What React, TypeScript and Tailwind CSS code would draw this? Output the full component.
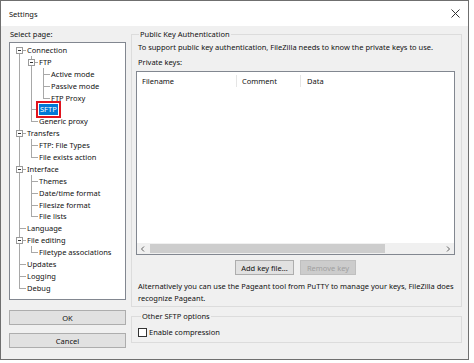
import type { ReactNode } from "react";

type Node = {
  label: string;
  level: number;
  expander?: boolean;
  selected?: boolean;
};

const tree: Node[] = [
  { label: "Connection", level: 0, expander: true },
  { label: "FTP", level: 1, expander: true },
  { label: "Active mode", level: 2 },
  { label: "Passive mode", level: 2 },
  { label: "FTP Proxy", level: 2 },
  { label: "SFTP", level: 1, selected: true },
  { label: "Generic proxy", level: 1 },
  { label: "Transfers", level: 0, expander: true },
  { label: "FTP: File Types", level: 1 },
  { label: "File exists action", level: 1 },
  { label: "Interface", level: 0, expander: true },
  { label: "Themes", level: 1 },
  { label: "Date/time format", level: 1 },
  { label: "Filesize format", level: 1 },
  { label: "File lists", level: 1 },
  { label: "Language", level: 0 },
  { label: "File editing", level: 0, expander: true },
  { label: "Filetype associations", level: 1 },
  { label: "Updates", level: 0 },
  { label: "Logging", level: 0 },
  { label: "Debug", level: 0 },
];

function hasNextSibling(i: number) {
  const level = tree[i].level;
  for (let j = i + 1; j < tree.length; j++) {
    if (tree[j].level < level) return false;
    if (tree[j].level === level) return true;
  }
  return false;
}

const LINE = "#a8a8a8";

// one 12x12 cell of the tree guides
function Guide({
  pipe,
  connector,
  top,
  bottom,
  expander,
}: {
  pipe?: boolean;
  connector?: boolean;
  top?: boolean;
  bottom?: boolean;
  expander?: boolean;
}) {
  return (
    <svg width="12" height="12" className="shrink-0" shapeRendering="crispEdges">
      {pipe && <line x1="5.5" y1="0" x2="5.5" y2="12" stroke={LINE} />}
      {connector && top && <line x1="5.5" y1="0" x2="5.5" y2="6.5" stroke={LINE} />}
      {connector && bottom && <line x1="5.5" y1="6.5" x2="5.5" y2="12" stroke={LINE} />}
      {connector && <line x1="5.5" y1="6.5" x2="12" y2="6.5" stroke={LINE} />}
      {expander && (
        <g>
          <rect x="2.5" y="3.5" width="6" height="6" fill="#fff" stroke="#9a9a9a" />
          <line x1="4" y1="6.5" x2="7" y2="6.5" stroke="#333" />
        </g>
      )}
    </svg>
  );
}

function Tree() {
  const open: boolean[] = [];
  return (
    <div className="h-[258px] mt-[2px] border border-[#828790] bg-white pt-[1px] pl-[4px]">
      {tree.map((n, i) => {
        const next = hasNextSibling(i);
        const guides: ReactNode[] = [];
        for (let k = 0; k < n.level; k++) {
          guides.push(<Guide key={k} pipe={open[k]} />);
        }
        guides.push(
          <Guide
            key="c"
            connector
            top={i !== 0}
            bottom={next}
            expander={n.expander}
          />
        );
        open[n.level] = next;
        return (
          <div key={n.label} className="flex h-[11.9px] items-center">
            {guides}
            {n.selected ? (
              <span className="ml-[1px] bg-[#0078d7] px-[1px] leading-[11px] text-white outline-2 outline-offset-[1px] outline-[#e0141e]">
                {n.label}
              </span>
            ) : (
              <span className="pl-[1px] whitespace-nowrap">{n.label}</span>
            )}
          </div>
        );
      })}
    </div>
  );
}

function Button({ children, disabled, className }: { children: ReactNode; disabled?: boolean; className?: string }) {
  return (
    <div
      className={
        "flex h-[15px] items-center justify-center border " +
        (disabled
          ? "border-[#bfbfbf] bg-[#cccccc] text-[#a0a0a0] "
          : "border-[#adadad] bg-[#e1e1e1] text-[#111] ") +
        (className ?? "")
      }
    >
      {children}
    </div>
  );
}

export default function App() {
  return (
    <div className="h-[363px] w-[474px] bg-white font-['Noto_Sans',sans-serif] text-[7.5px] leading-[12px] text-[#111]">
      <div className="flex h-[360px] w-[469px] flex-col border border-[#6f6f6f] bg-[#f0f0f0]">
        <div className="flex h-[25px] shrink-0 items-center justify-between bg-white pl-2 pr-[8px]">
          <span>Settings</span>
          <svg width="9" height="9" viewBox="0 0 9 9">
            <path d="M0.5 0.5 L8.5 8.5 M8.5 0.5 L0.5 8.5" stroke="#333" strokeWidth="1" />
          </svg>
        </div>

        <div className="flex gap-[5px] pl-2 pt-[2px]">
          {/* left column */}
          <div className="w-[117px] shrink-0">
            <div className="pl-[1px]">Select page:</div>
            <Tree />
            <Button className="mt-[10px]">OK</Button>
            <Button className="mt-[8px]">Cancel</Button>
          </div>

          {/* right column */}
          <div className="w-[331px]">
            <fieldset className="border border-[#dcdcdc] pb-[2px] pl-[4px] pr-[6px]">
              <legend className="ml-[3px] px-[1px]">Public Key Authentication</legend>
              <div className="pt-[1px] pl-[2px]">
                To support public key authentication, FileZilla needs to know the private keys to use.
              </div>
              <div className="mt-[3px] pl-[2px]">Private keys:</div>
              <div className="mt-[3px] flex h-[184px] flex-col border border-[#828790] bg-white">
                <div className="flex h-[17px] items-center">
                  <div className="w-[100px] border-r border-[#e5e5e5] pl-[5px]">Filename</div>
                  <div className="w-[64px] border-r border-[#e5e5e5] pl-[5px]">Comment</div>
                  <div className="pl-[6px]">Data</div>
                </div>
                <div className="flex-1" />
                <div className="flex h-[11px] items-center bg-[#f0f0f0] px-[2px] text-[#606060]">
                  <svg width="8" height="8" viewBox="0 0 8 8" className="shrink-0">
                    <path d="M5 1.5 L2.5 4 L5 6.5" fill="none" stroke="#606060" />
                  </svg>
                  <div className="ml-[3px] h-[9px] w-[235px] bg-[#cdcdcd]" />
                  <div className="flex-1" />
                  <svg width="8" height="8" viewBox="0 0 8 8" className="shrink-0">
                    <path d="M3 1.5 L5.5 4 L3 6.5" fill="none" stroke="#606060" />
                  </svg>
                </div>
              </div>
              <div className="mt-[5px] flex justify-center gap-[6px]">
                <Button className="w-[59px]">Add key file...</Button>
                <Button disabled className="w-[56px]">
                  Remove key
                </Button>
              </div>
              <div className="mt-[5px] pl-[2px]">
                Alternatively you can use the Pageant tool from PuTTY to manage your keys, FileZilla does
                recognize Pageant.
              </div>
            </fieldset>

            <fieldset className="mt-[3px] border border-[#dcdcdc] pb-[4px] pl-[6px] pr-[6px]">
              <legend className="ml-[3px] px-[1px]">Other SFTP options</legend>
              <label className="mt-[4px] flex h-[12px] items-center gap-[2px]">
                <span className="h-[9px] w-[9px] border border-[#333] bg-white" />
                <span>Enable compression</span>
              </label>
            </fieldset>
          </div>
        </div>
      </div>
    </div>
  );
}
